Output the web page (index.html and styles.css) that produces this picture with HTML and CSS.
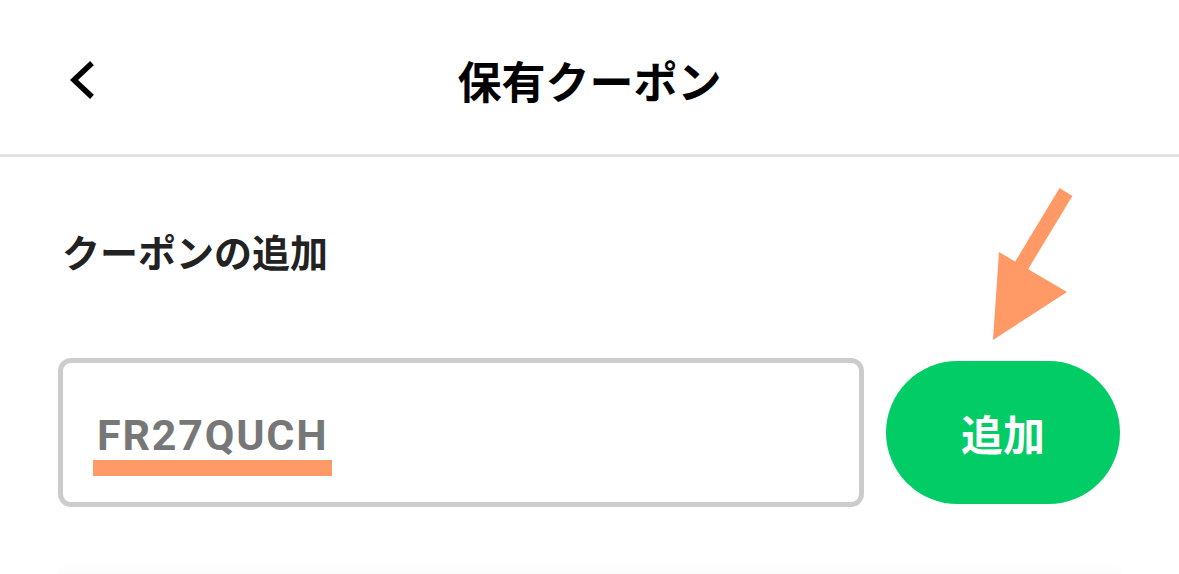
FILE: index.html
```html
<!DOCTYPE html>
<html lang="ja">
  <head>
    <meta charset="UTF-8" />
    <meta name="viewport" content="width=device-width, initial-scale=1.0" />
    <title>保有クーポン</title>
    <link rel="stylesheet" href="styles.css">
  </head>
  <body>
    <div class="header">
      <a href="#" class="back-btn" aria-label="戻る">
        <svg width="30" height="40" viewBox="0 0 30 40">
          <path d="M20 5 L4 20 L20 35" fill="none" stroke="#000" stroke-width="5.5" stroke-linecap="square" stroke-linejoin="miter" />
        </svg>
      </a>
      <h1 class="header-title">保有クーポン</h1>
      <div></div>
    </div>

    <div class="content">
      <h2 class="section-title">クーポンの追加</h2>

      <div class="input-row">
        <div class="coupon-input">
          <span class="coupon-code">FR27QUCH</span>
        </div>
        <button class="add-btn">追加</button>
      </div>

      <div class="next-card"></div>
    </div>

    <!-- annotation arrow -->
    <svg class="arrow" width="120" height="170" viewBox="0 0 120 170">
      <line x1="106" y1="22" x2="54" y2="108" stroke="#ff9966" stroke-width="15" />
      <polygon points="33,170 39,82 107,122" fill="#ff9966" />
    </svg>
  </body>
</html>
```

FILE: styles.css
```css
* {
  margin: 0;
  padding: 0;
  box-sizing: border-box;
}

body {
  font-family: "Noto Sans CJK JP", "Noto Sans", sans-serif;
  background: #fff;
  width: 1179px;
  height: 574px;
  overflow: hidden;
  position: relative;
}

.header {
  height: 157px;
  display: grid;
  grid-template-columns: 1fr auto 1fr;
  align-items: center;
  border-bottom: 3px solid #e2e2e2;
  padding-top: 6px;
}

.back-btn {
  display: inline-flex;
  margin-left: 70px;
}

.header-title {
  font-size: 44px;
  font-weight: 700;
  color: #000;
  line-height: 1;
}

.content {
  padding: 0 58px;
}

.section-title {
  font-size: 38px;
  font-weight: 700;
  color: #222;
  line-height: 1;
  margin-top: 75px;
  padding-left: 4px;
}

.input-row {
  display: flex;
  align-items: center;
  gap: 22px;
  margin-top: 88px;
}

.coupon-input {
  width: 806px;
  height: 149px;
  border: 5px solid #cccccc;
  border-radius: 13px;
  padding: 51px 0 0 30px;
}

.coupon-code {
  display: inline-block;
  font-family: Roboto, "Liberation Sans", sans-serif;
  font-size: 43px;
  font-weight: 700;
  color: #777;
  line-height: 1;
  letter-spacing: 1.8px;
  padding: 0 4px 3px;
  border-bottom: 16px solid #ff9966;
}

.add-btn {
  width: 234px;
  height: 143px;
  background: #02cc66;
  color: #fff;
  border: none;
  border-radius: 72px;
  font-family: "Noto Sans CJK JP", sans-serif;
  font-size: 42px;
  font-weight: 700;
}

.next-card {
  margin-top: 55px;
  height: 20px;
  background: linear-gradient(#fff, #fafafa);
  border-radius: 12px;
}

.arrow {
  position: absolute;
  left: 960px;
  top: 170px;
}
```
